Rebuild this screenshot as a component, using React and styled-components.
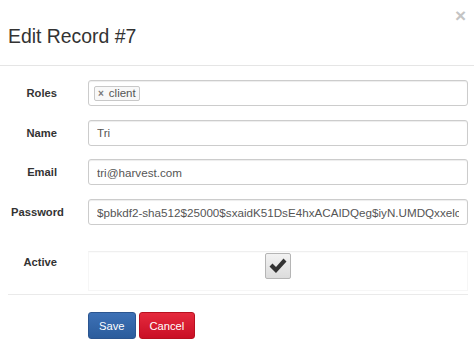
import React from 'react';
import styled, { createGlobalStyle } from 'styled-components';

const GlobalStyle = createGlobalStyle`
  body {
    margin: 0;
    background: #fff;
    font-family: "Liberation Sans", Arial, sans-serif;
    color: #333;
  }
`;

const App = () => {
  return (
    <Modal>
      <GlobalStyle />
      <Header>
        <Title>Edit Record #7</Title>
        <Close>×</Close>
      </Header>
      <Form>
        <Row>
          <Label>Roles</Label>
          <TagInput>
            <Tag>
              <TagRemove>×</TagRemove>
              client
            </Tag>
          </TagInput>
        </Row>
        <Row>
          <Label>Name</Label>
          <Input defaultValue="Tri" />
        </Row>
        <Row>
          <Label>Email</Label>
          <Input defaultValue="tri@harvest.com" />
        </Row>
        <Row>
          <Label>Password</Label>
          <Input defaultValue="$pbkdf2-sha512$25000$sxaidK51DsE4hxACAIDQeg$iyN.UMDQxxelolTqW" />
        </Row>
        <Row $spaced>
          <Label $short>Active</Label>
          <CheckField>
            <CheckBox>
              <svg width="20" height="18" viewBox="0 0 20 18">
                <path d="M1.5 9.5 L4.5 6.5 L8 10 L15.5 1.5 L18.5 4.5 L8 16 Z" fill="#333" />
              </svg>
            </CheckBox>
          </CheckField>
        </Row>
        <Divider />
        <Actions>
          <Button $variant="primary">Save</Button>
          <Button $variant="danger">Cancel</Button>
        </Actions>
      </Form>
    </Modal>
  );
};

const Modal = styled.div`
  width: 474px;
  height: 351px;
  background: #fff;
  overflow: hidden;
`;

const Header = styled.div`
  height: 66px;
  border-bottom: 1px solid #e5e5e5;
  display: flex;
  align-items: flex-start;
  justify-content: space-between;
  padding: 0 8px;
  box-sizing: border-box;
`;

const Title = styled.h4`
  margin: 0;
  padding-top: 24px;
  font-size: 19.4px;
  line-height: 24px;
  font-weight: normal;
  color: #333;
`;

const Close = styled.span`
  margin-top: 4px;
  font-size: 19px;
  line-height: 24px;
  font-weight: bold;
  color: #c4c4c4;
`;

const Form = styled.div`
  padding: 14px 6px 0 8px;
  display: flex;
  flex-direction: column;
  gap: 13.7px;
`;

const Row = styled.div`
  display: grid;
  grid-template-columns: 80px 1fr;
  align-items: start;
  margin-top: ${p => (p.$spaced ? '12px' : '0')};
`;

const Label = styled.label`
  padding: 0 31px 0 3px;
  text-align: right;
  font-size: 11.2px;
  font-weight: bold;
  line-height: ${p => (p.$short ? '22px' : '26px')};
  color: #333;
  white-space: nowrap;
`;

const fieldBase = `
  height: 26px;
  box-sizing: border-box;
  border: 1px solid #ccc;
  border-radius: 3px;
  box-shadow: inset 0 1px 1px rgba(0, 0, 0, 0.075);
  background: #fff;
`;

const Input = styled.input`
  ${fieldBase}
  width: 100%;
  padding: 0 8px;
  font-family: "Liberation Sans", Arial, sans-serif;
  font-size: 11.65px;
  color: #555;
  outline: none;
`;

const TagInput = styled.div`
  ${fieldBase}
  display: flex;
  align-items: center;
  padding: 0 5px;
`;

const Tag = styled.span`
  display: inline-flex;
  align-items: center;
  height: 15px;
  box-sizing: border-box;
  padding: 0 3px 0 3px;
  border: 1px solid #c8c8c8;
  border-radius: 2px;
  background: #f8f8f8;
  font-size: 11.5px;
  color: #555;
`;

const TagRemove = styled.span`
  font-size: 10px;
  font-weight: bold;
  color: #777;
  margin-right: 5px;
`;

const CheckField = styled.div`
  height: 40px;
  box-sizing: border-box;
  border: 1px solid #f6f6f6;
  border-top-color: #efefef;
  box-shadow: inset 0 1px 1px rgba(0, 0, 0, 0.02);
  display: flex;
  justify-content: center;
  align-items: flex-start;
  padding-top: 1px;
`;

const CheckBox = styled.span`
  width: 26px;
  height: 26px;
  box-sizing: border-box;
  border: 1px solid #b5b5b5;
  border-radius: 2px;
  background: linear-gradient(#f2f2f2, #dcdcdc);
  display: flex;
  align-items: center;
  justify-content: center;
`;

const Divider = styled.hr`
  margin: -10px 0 3px 0;
  border: 0;
  border-top: 1px solid #eaeaea;
`;

const Actions = styled.div`
  display: flex;
  gap: 3px;
  padding-left: 80px;
`;

const Button = styled.button`
  height: 27px;
  padding: 0 10px;
  border-radius: 3px;
  font-family: "Liberation Sans", Arial, sans-serif;
  font-size: 11.2px;
  color: #fff;
  cursor: pointer;
  border: 1px solid ${p => (p.$variant === 'primary' ? '#2b5590' : '#b8101f')};
  background: ${p =>
    p.$variant === 'primary'
      ? 'linear-gradient(#3d71b6, #2b5c9c)'
      : 'linear-gradient(#e52a3d, #c90f25)'};
`;

export default App;
